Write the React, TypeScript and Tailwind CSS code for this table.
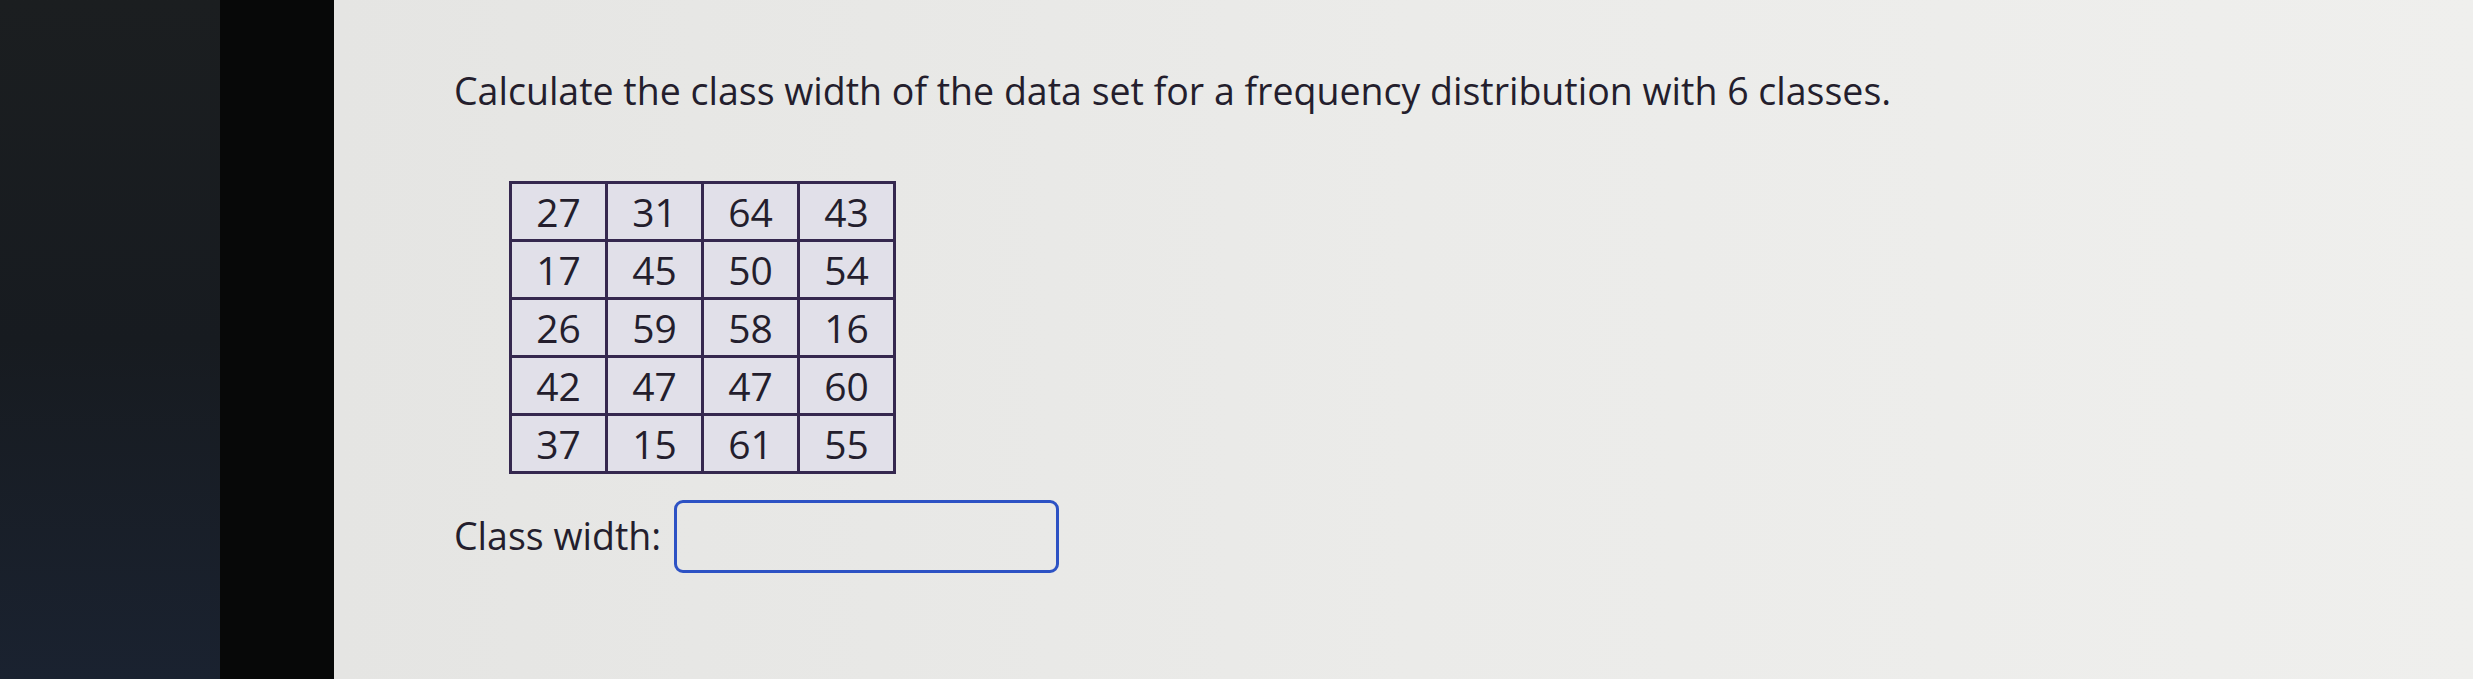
const rows = [
  [27, 31, 64, 43],
  [17, 45, 50, 54],
  [26, 59, 58, 16],
  [42, 47, 47, 60],
  [37, 15, 61, 55],
];

export default function App() {
  return (
    <div className="flex h-[679px] w-[2473px] overflow-hidden font-['Open_Sans',sans-serif]">
      {/* desk / dark surroundings */}
      <div className="w-[220px] shrink-0 bg-gradient-to-b from-[#1b1e20] via-[#171b20] to-[#1a2230]" />
      {/* monitor bezel */}
      <div className="w-[114px] shrink-0 bg-[#070808]" />

      {/* screen */}
      <div className="flex-1 bg-gradient-to-r from-[#e5e5e3] via-[#ebebe9] to-[#efefed] pl-[120px] pt-[67px] text-[#241e2d]">
        <p className="text-[37.5px] font-medium leading-[48px]">
          Calculate the class width of the data set for a frequency distribution with 6 classes.
        </p>

        <table className="ml-[55px] mt-[66px] border-collapse">
          <tbody>
            {rows.map((r, i) => (
              <tr key={i}>
                {r.map((n, j) => (
                  <td
                    key={j}
                    className="h-[58px] w-[96px] border-[3px] border-[#35284f] bg-[#e1e0e9] text-center text-[39px] font-medium leading-none"
                  >
                    {n}
                  </td>
                ))}
              </tr>
            ))}
          </tbody>
        </table>

        <div className="mt-[26px] flex items-center gap-[13px]">
          <span className="text-[37.5px] font-medium">Class width:</span>
          <div className="h-[73px] w-[385px] rounded-[9px] border-[3px] border-[#2d52c4]" />
        </div>
      </div>
    </div>
  );
}
